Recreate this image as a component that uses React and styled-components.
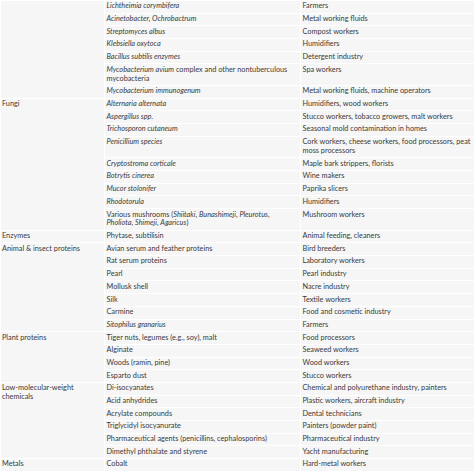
import React from "react";
import styled, { createGlobalStyle } from "styled-components";

const Global = createGlobalStyle`
  html, body { margin: 0; padding: 0; background: #ffffff; }
  body { font-family: Lato, "Noto Sans", sans-serif; }
`;

const Table = styled.table`
  width: 474px;
  table-layout: fixed;
  border-collapse: collapse;
  font-family: Lato, "Noto Sans", sans-serif;
  font-size: 7.3px;
  line-height: 8.9px;
  color: #3a3a3a;
`;

const Col = styled.col`
  width: ${(p) => p.$w}px;
`;

const Cell = styled.td`
  background: #f6f6f6;
  border: 1px solid #ffffff;
  padding: 1.4px ${(p) => (p.$mid ? 4 : 1.5)}px 1.4px ${(p) => (p.$first ? 1 : 1.5)}px;
  vertical-align: top;
  text-align: left;
`;

const Em = styled.i`
  font-style: italic;
`;

const groups = [
  {
    cat: "",
    rows: [
      [<Em>Lichtheimia corymbifera</Em>, "Farmers"],
      [<Em>Acinetobacter, Ochrobactrum</Em>, "Metal working fluids"],
      [<Em>Streptomyces albus</Em>, "Compost workers"],
      [<Em>Klebsiella oxytoca</Em>, "Humidifiers"],
      [<Em>Bacillus subtilis enzymes</Em>, "Detergent industry"],
      [
        <>
          <Em>Mycobacterium avium</Em> complex and other nontuberculous mycobacteria
        </>,
        "Spa workers",
      ],
      [<Em>Mycobacterium immunogenum</Em>, "Metal working fluids, machine operators"],
    ],
  },
  {
    cat: "Fungi",
    rows: [
      [<Em>Alternaria alternata</Em>, "Humidifiers, wood workers"],
      [<Em>Aspergillus spp.</Em>, "Stucco workers, tobacco growers, malt workers"],
      [<Em>Trichosporon cutaneum</Em>, "Seasonal mold contamination in homes"],
      [
        <Em>Penicillium species</Em>,
        "Cork workers, cheese workers, food processors, peat moss processors",
      ],
      [<Em>Cryptostroma corticale</Em>, "Maple bark strippers, florists"],
      [<Em>Botrytis cinerea</Em>, "Wine makers"],
      [<Em>Mucor stolonifer</Em>, "Paprika slicers"],
      [<Em>Rhodotorula</Em>, "Humidifiers"],
      [
        <>
          Various mushrooms (<Em>Shiitaki</Em>, <Em>Bunashimeji</Em>, <Em>Pleurotus</Em>,{" "}
          <Em>Pholiota</Em>, <Em>Shimeji</Em>, <Em>Agaricus</Em>)
        </>,
        "Mushroom workers",
      ],
    ],
  },
  {
    cat: "Enzymes",
    rows: [["Phytase, subtilisin", "Animal feeding, cleaners"]],
  },
  {
    cat: "Animal & insect proteins",
    rows: [
      ["Avian serum and feather proteins", "Bird breeders"],
      ["Rat serum proteins", "Laboratory workers"],
      ["Pearl", "Pearl industry"],
      ["Mollusk shell", "Nacre industry"],
      ["Silk", "Textile workers"],
      ["Carmine", "Food and cosmetic industry"],
      [<Em>Sitophilus granarius</Em>, "Farmers"],
    ],
  },
  {
    cat: "Plant proteins",
    rows: [
      ["Tiger nuts, legumes (e.g., soy), malt", "Food processors"],
      ["Alginate", "Seaweed workers"],
      ["Woods (ramin, pine)", "Wood workers"],
      ["Esparto dust", "Stucco workers"],
    ],
  },
  {
    cat: "Low-molecular-weight chemicals",
    rows: [
      ["Di-isocyanates", "Chemical and polyurethane industry, painters"],
      ["Acid anhydrides", "Plastic workers, aircraft industry"],
      ["Acrylate compounds", "Dental technicians"],
      ["Triglycidyl isocyanurate", "Painters (powder paint)"],
      ["Pharmaceutical agents (penicillins, cephalosporins)", "Pharmaceutical industry"],
      ["Dimethyl phthalate and styrene", "Yacht manufacturing"],
    ],
  },
  {
    cat: "Metals",
    rows: [["Cobalt", "Hard-metal workers"]],
  },
];

export default function App() {
  return (
    <>
      <Global />
      <Table>
        <colgroup>
          <Col $w={104} />
          <Col $w={196} />
          <Col $w={174} />
        </colgroup>
        <tbody>
          {groups.map((g, gi) =>
            g.rows.map((r, ri) => (
              <tr key={`${gi}-${ri}`}>
                {ri === 0 && (
                  <Cell $first rowSpan={g.rows.length}>
                    {g.cat}
                  </Cell>
                )}
                <Cell $mid>{r[0]}</Cell>
                <Cell>{r[1]}</Cell>
              </tr>
            ))
          )}
        </tbody>
      </Table>
    </>
  );
}
